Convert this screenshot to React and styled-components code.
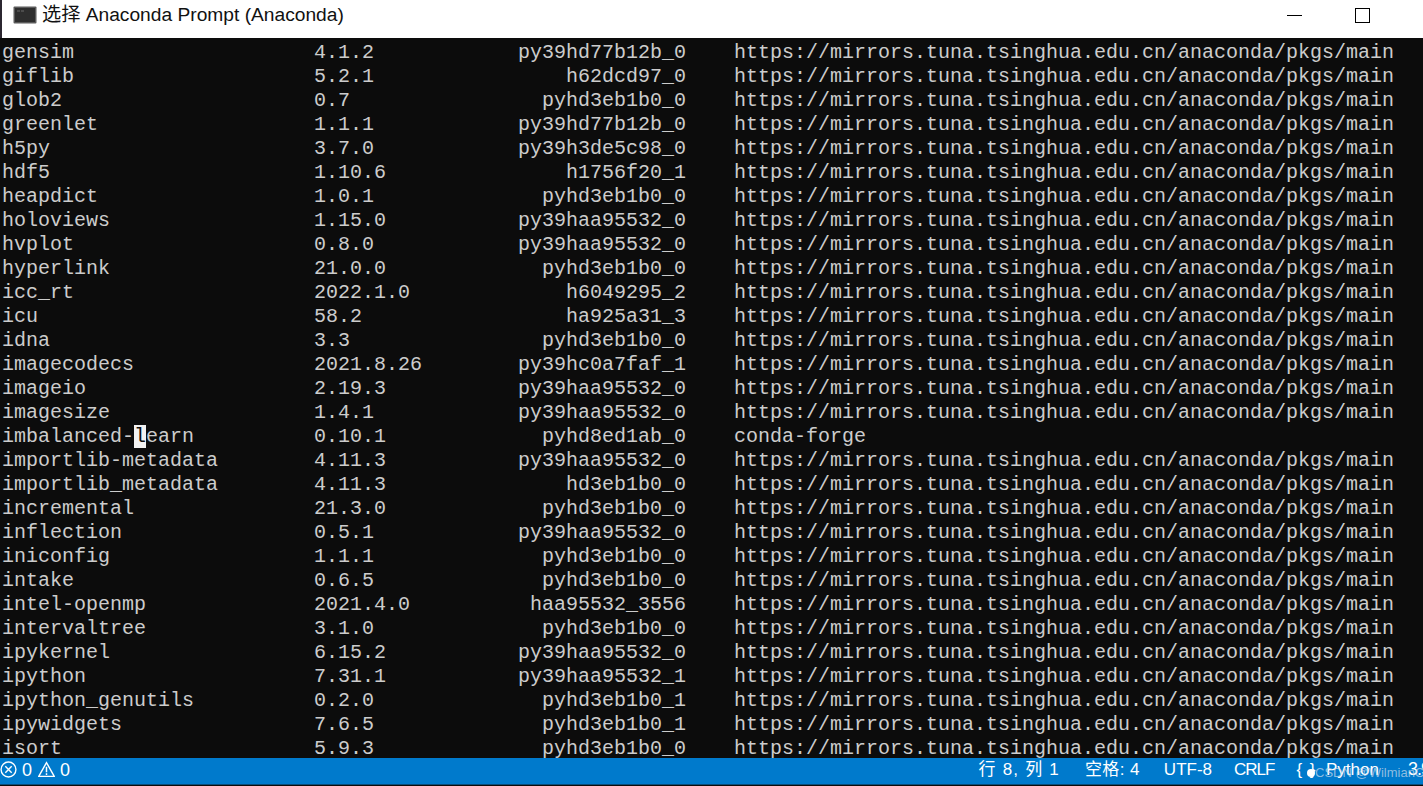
import React from 'react'
import styled, { createGlobalStyle } from 'styled-components'

const GlobalStyle = createGlobalStyle`
  html, body { margin: 0; padding: 0; background: #fff; overflow: hidden; }
`

const Window = styled.div`
  width: 1423px;
  height: 786px;
  display: flex;
  flex-direction: column;
  background: #0c0c0c;
  overflow: hidden;
`

const TitleBar = styled.div`
  height: 38px;
  flex: none;
  display: flex;
  align-items: center;
  background: #fff;
  border-left: 2px solid #2b2630;
  padding: 0 0 8px 11px;
  box-sizing: border-box;
`

const AppIcon = styled.svg`
  width: 24px;
  height: 18px;
  margin: -1px 5px 0 0;
  flex: none;
`

const TitleText = styled.div`
  flex: 1;
  margin-top: -4px;
  font-family: "Liberation Sans", "Noto Sans CJK SC", sans-serif;
  font-size: 19.2px;
  color: #111;
  white-space: nowrap;
`

const WinButton = styled.div`
  width: ${p => p.$w}px;
  height: 30px;
  display: flex;
  align-items: center;
  justify-content: center;
  flex: none;
`

const MinLine = styled.div`
  width: 15px;
  height: 1px;
  background: #000;
`

const MaxBox = styled.div`
  width: 13px;
  height: 13px;
  border: 1px solid #000;
`

const Terminal = styled.div`
  height: 720px;
  flex: none;
  padding-left: 2px;
  font-family: "Liberation Mono", "DejaVu Sans Mono", monospace;
  font-size: 20px;
  color: #cccccc;
`

const Row = styled.div`
  height: 24px;
  line-height: 29px;
  display: grid;
  grid-template-columns: 312px 372px 48px 1fr;
  white-space: pre;
`

const VersionLine = styled.span`
  display: flex;
  justify-content: space-between;
`

const Channel = styled.span`
  grid-column: 4;
`

const Selected = styled.span`
  background: #f2f2f2;
  color: #0c0c0c;
`

const StatusBar = styled.div`
  position: relative;
  height: 27px;
  flex: none;
  display: flex;
  align-items: baseline;
  justify-content: flex-end;
  background: #007acc;
  border-bottom: 1px solid #0a4d7a;
  padding-top: 1px;
  box-sizing: border-box;
  color: #fff;
  font-family: "Liberation Sans", "Noto Sans CJK SC", sans-serif;
  font-size: 17px;
  line-height: 20px;
  white-space: nowrap;
`

const StatusLeft = styled.div`
  display: flex;
  align-items: center;
  flex: 1;
  align-self: center;
  margin-top: -4px;
`

const StatusIcon = styled.svg`
  width: 17px;
  height: 17px;
  flex: none;
`

const Count = styled.span`
  margin: 0 6px 0 5px;
  font-size: 18px;
`

const StatusItem = styled.span`
  margin-left: ${p => p.$gap}px;
  letter-spacing: ${p => p.$track || 0}px;
`

const LastItem = styled.span`
  margin-left: 29px;
  margin-right: -7px;
  font-size: 18px;
  letter-spacing: -1px;
`

const Watermark = styled.div`
  position: absolute;
  left: 1315px;
  top: 5px;
  font-family: "Liberation Sans", sans-serif;
  font-size: 13px;
  color: rgba(205, 220, 235, 0.7);
`

const Dot = styled.div`
  position: absolute;
  left: 1307px;
  top: 11px;
  width: 8px;
  height: 8px;
  border-radius: 50%;
  background: #fff;
`

const main = 'https://mirrors.tuna.tsinghua.edu.cn/anaconda/pkgs/main'

const packages = [
  ['gensim', '4.1.2', 'py39hd77b12b_0'],
  ['giflib', '5.2.1', 'h62dcd97_0'],
  ['glob2', '0.7', 'pyhd3eb1b0_0'],
  ['greenlet', '1.1.1', 'py39hd77b12b_0'],
  ['h5py', '3.7.0', 'py39h3de5c98_0'],
  ['hdf5', '1.10.6', 'h1756f20_1'],
  ['heapdict', '1.0.1', 'pyhd3eb1b0_0'],
  ['holoviews', '1.15.0', 'py39haa95532_0'],
  ['hvplot', '0.8.0', 'py39haa95532_0'],
  ['hyperlink', '21.0.0', 'pyhd3eb1b0_0'],
  ['icc_rt', '2022.1.0', 'h6049295_2'],
  ['icu', '58.2', 'ha925a31_3'],
  ['idna', '3.3', 'pyhd3eb1b0_0'],
  ['imagecodecs', '2021.8.26', 'py39hc0a7faf_1'],
  ['imageio', '2.19.3', 'py39haa95532_0'],
  ['imagesize', '1.4.1', 'py39haa95532_0'],
  ['imbalanced-learn', '0.10.1', 'pyhd8ed1ab_0', 'conda-forge'],
  ['importlib-metadata', '4.11.3', 'py39haa95532_0'],
  ['importlib_metadata', '4.11.3', 'hd3eb1b0_0'],
  ['incremental', '21.3.0', 'pyhd3eb1b0_0'],
  ['inflection', '0.5.1', 'py39haa95532_0'],
  ['iniconfig', '1.1.1', 'pyhd3eb1b0_0'],
  ['intake', '0.6.5', 'pyhd3eb1b0_0'],
  ['intel-openmp', '2021.4.0', 'haa95532_3556'],
  ['intervaltree', '3.1.0', 'pyhd3eb1b0_0'],
  ['ipykernel', '6.15.2', 'py39haa95532_0'],
  ['ipython', '7.31.1', 'py39haa95532_1'],
  ['ipython_genutils', '0.2.0', 'pyhd3eb1b0_1'],
  ['ipywidgets', '7.6.5', 'pyhd3eb1b0_1'],
  ['isort', '5.9.3', 'pyhd3eb1b0_0'],
]

function PackageName({ name }) {
  if (name !== 'imbalanced-learn') return <span>{name}</span>
  return <span>imbalanced-<Selected>l</Selected>earn</span>
}

export default function App() {
  return (
    <Window>
      <GlobalStyle />
      <TitleBar>
        <AppIcon viewBox="0 0 24 18">
          <rect x="0.5" y="0.5" width="23" height="17" rx="1" fill="#5a5a5a" />
          <rect x="2" y="2" width="20" height="14" fill="#2e2e2e" />
          <path d="M4 5h3M8 5h3" stroke="#6a6a6a" strokeWidth="1" />
        </AppIcon>
        <TitleText>选择 Anaconda Prompt (Anaconda)</TitleText>
        <WinButton $w={40}><MinLine /></WinButton>
        <WinButton $w={96}><MaxBox /></WinButton>
        <WinButton $w={13} />
      </TitleBar>
      <Terminal>
        {packages.map(([name, version, build, channel]) => (
          <Row key={name}>
            <PackageName name={name} />
            <VersionLine>
              <span>{version}</span>
              <span>{build}</span>
            </VersionLine>
            <Channel>{channel || main}</Channel>
          </Row>
        ))}
      </Terminal>
      <StatusBar>
        <StatusLeft>
          <StatusIcon viewBox="0 0 16 16">
            <circle cx="8" cy="8" r="7" fill="none" stroke="#fff" strokeWidth="1.3" />
            <path d="M5 5l6 6M11 5l-6 6" stroke="#fff" strokeWidth="1.3" />
          </StatusIcon>
          <Count>0</Count>
          <StatusIcon viewBox="0 0 16 16">
            <path d="M8 1.5L15.3 14.5H0.7z" fill="none" stroke="#fff" strokeWidth="1.3" />
            <path d="M8 5.5v5M8 11.5v1.6" stroke="#fff" strokeWidth="1.4" />
          </StatusIcon>
          <Count>0</Count>
        </StatusLeft>
        <StatusItem $track={1.2}>行 8, 列 1</StatusItem>
        <StatusItem $gap={25} $track={0.4}>空格: 4</StatusItem>
        <StatusItem $gap={24}>UTF-8</StatusItem>
        <StatusItem $gap={22} $track={-1}>CRLF</StatusItem>
        <StatusItem $gap={22} $track={1.5}>{'{  }'}</StatusItem>
        <StatusItem $gap={9}>Python</StatusItem>
        <LastItem>3.9</LastItem>
        <Dot />
        <Watermark>CSDN @WilmianC</Watermark>
      </StatusBar>
    </Window>
  )
}
